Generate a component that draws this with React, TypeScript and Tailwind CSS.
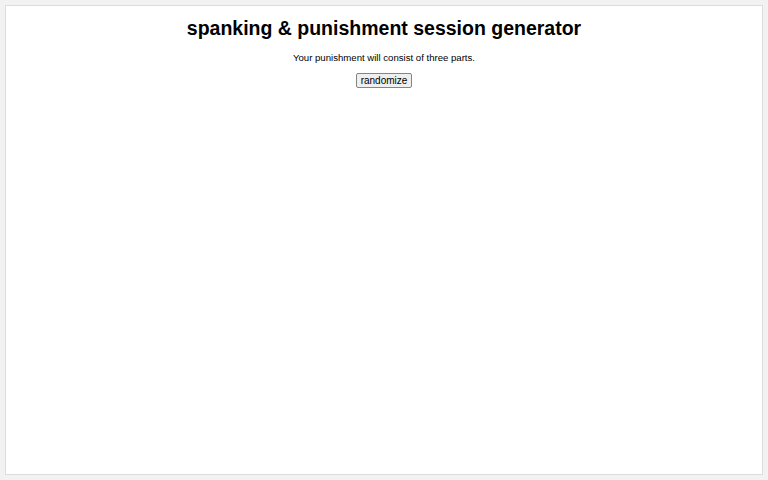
export default function App() {
  return (
    <div className="min-h-screen bg-[#f2f2f2] p-[5px] font-['Liberation_Sans',Arial,sans-serif] text-black">
      <div className="h-[470px] border border-[#dcdcdc] bg-white flex flex-col items-center">
        <h1 className="mt-[10px] text-[19.5px] leading-[24px] font-bold">
          spanking &amp; punishment session generator
        </h1>
        <p className="mt-[12px] text-[9.6px] leading-[12px]">
          Your punishment will consist of three parts.
        </p>
        <button className="mt-[9px] h-[15px] px-[4px] text-[10px] leading-[12px] bg-[#efefef] border border-[#858585] rounded-[2px]">
          randomize
        </button>
      </div>
    </div>
  );
}
